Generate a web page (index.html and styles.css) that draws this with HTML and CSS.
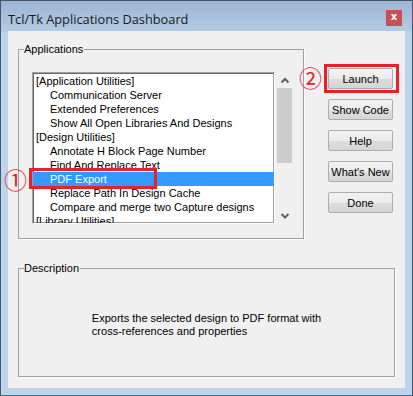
FILE: index.html
```html
<!DOCTYPE html>
<html>
<head>
    <title>Tcl/Tk Applications Dashboard</title>
    <link rel="stylesheet" href="styles.css">
</head>
<body>
    <div class="window">
        <div class="titlebar">
            <span class="title">Tcl/Tk Applications Dashboard</span>
            <span class="close-btn">x</span>
        </div>

        <div class="client">
            <div class="top-row">
                <fieldset class="group apps-group">
                    <legend>Applications</legend>
                    <div class="list-wrap">
                        <ul class="listbox">
                            <li>[Application Utilities]</li>
                            <li class="sub">Communication Server</li>
                            <li class="sub">Extended Preferences</li>
                            <li class="sub">Show All Open Libraries And Designs</li>
                            <li>[Design Utilities]</li>
                            <li class="sub">Annotate H Block Page Number</li>
                            <li class="sub">Find And Replace Text</li>
                            <li class="sub selected">PDF Export</li>
                            <li class="sub">Replace Path In Design Cache</li>
                            <li class="sub">Compare and merge two Capture designs</li>
                            <li>[Library Utilities]</li>
                        </ul>
                        <div class="scrollbar">
                            <svg class="arrow" width="16" height="14" viewBox="0 0 16 14">
                                <polyline points="4.5,9.5 8,6 11.5,9.5" fill="none" stroke="#606060" stroke-width="2"/>
                            </svg>
                            <div class="thumb"></div>
                            <svg class="arrow arrow-down" width="16" height="14" viewBox="0 0 16 14">
                                <polyline points="4.5,5 8,8.5 11.5,5" fill="none" stroke="#606060" stroke-width="2"/>
                            </svg>
                        </div>
                    </div>
                </fieldset>

                <div class="buttons">
                    <button class="btn">Launch</button>
                    <button class="btn">Show Code</button>
                    <button class="btn">Help</button>
                    <button class="btn">What's New</button>
                    <button class="btn">Done</button>
                </div>
            </div>

            <fieldset class="group desc-group">
                <legend>Description</legend>
                <div class="desc-body">
                    <p>Exports the selected design to PDF format with<br>cross-references and properties</p>
                </div>
            </fieldset>
        </div>

        <!-- annotation marks drawn over the dialog -->
        <span class="mark mark-one">①</span>
        <span class="mark mark-two">②</span>
        <div class="mark-box pdf-box"></div>
        <div class="mark-box launch-box"></div>
    </div>
</body>
</html>
```

FILE: styles.css
```css
* {
    box-sizing: border-box;
}
body {
    margin: 0;
    background-color: #b9d1ea;
    font-family: "Liberation Sans", Arial, sans-serif;
    font-size: 11px;
    color: #000;
}
.window {
    position: relative;
    width: 413px;
    height: 396px;
    border: 1px solid #44566b;
    border-bottom-color: #3a6f86;
    background: linear-gradient(to bottom, #9cb5d2 0px, #b3cbe5 30px, #bcd4ec 31px, #bcd4ec 100%);
    display: flex;
    flex-direction: column;
}
.titlebar {
    height: 30px;
    display: flex;
    align-items: center;
    justify-content: space-between;
    padding: 0 10px 0 7px;
}
.title {
    font-family: "Open Sans", sans-serif;
    font-size: 12.8px;
    color: #1a1a1a;
    margin-top: 5px;
}
.close-btn {
    width: 16px;
    height: 16px;
    background-color: #c75050;
    color: #fff;
    font-family: "DejaVu Sans", sans-serif;
    font-weight: bold;
    font-size: 10px;
    line-height: 14px;
    text-align: center;
    margin-top: 3px;
}
.client {
    background-color: #f0f0f0;
    margin: 0 7px 7px 7px;
    flex: 1;
    padding: 12px 0 0 10px;
}
.top-row {
    display: flex;
}
.group {
    margin: 0;
    border: 1px solid #a0a0a0;
    box-shadow: 1px 1px 0 #fff;
    padding: 0;
    min-width: 0;
}
.group legend {
    margin-left: 5px;
    padding: 0 1px 0 0;
    line-height: 13px;
    font-size: 11px;
}
.apps-group {
    width: 286px;
    height: 196px;
    padding: 16px 0 0 13px;
}
.apps-group legend {
    margin-left: -8px;
}
.list-wrap {
    display: flex;
    gap: 2px;
}
.listbox {
    list-style: none;
    margin: 0;
    padding: 1px 0 0 0;
    width: 243px;
    height: 152px;
    overflow: hidden;
    background-color: #fff;
    border: 1px solid;
    border-color: #a0a0a0 #fff #fff #a0a0a0;
    box-shadow: inset 1px 0 0 #696969, inset 0 1px 0 #696969, inset -1px -1px 0 #a0a0a0;
}
.listbox li {
    height: 14px;
    line-height: 14px;
    padding-left: 3px;
    white-space: nowrap;
}
.listbox li.sub {
    padding-left: 17px;
}
.listbox li.selected {
    background-color: #3399ff;
    color: #fff;
}
.scrollbar {
    width: 16px;
    height: 152px;
    display: flex;
    flex-direction: column;
}
.arrow {
    display: block;
    margin-top: 1px;
}
.thumb {
    margin-top: 1px;
    width: 15px;
    height: 75px;
    background-color: #cdcdcd;
}
.arrow-down {
    margin-top: auto;
    margin-bottom: 1px;
}
.buttons {
    display: flex;
    flex-direction: column;
    gap: 10px;
    margin-left: 24px;
    padding-top: 25px;
}
.btn {
    width: 65px;
    height: 21px;
    font-family: "Liberation Sans", Arial, sans-serif;
    font-size: 11px;
    color: #000;
    border: 1px solid #adadad;
    border-radius: 2px;
    background: linear-gradient(to bottom, #f2f2f2 0%, #ebebeb 50%, #dddddd 51%, #d6d6d6 100%);
    padding: 0;
}
.desc-group {
    width: 377px;
    height: 115px;
    margin-top: 23px;
}
.desc-body {
    height: 100px;
    display: flex;
    align-items: center;
    justify-content: center;
}
.desc-body p {
    margin: 0;
    line-height: 13px;
}
.mark {
    position: absolute;
    color: #e8202a;
    font-family: "Noto Sans CJK SC", sans-serif;
    font-size: 23px;
    line-height: 24px;
}
.mark-one {
    left: 3px;
    top: 166px;
}
.mark-two {
    left: 298px;
    top: 64px;
}
.mark-box {
    position: absolute;
    border: 3px solid #e8202a;
}
.pdf-box {
    left: 28px;
    top: 167px;
    width: 128px;
    height: 21px;
}
.launch-box {
    left: 323px;
    top: 63px;
    width: 75px;
    height: 29px;
}
```
